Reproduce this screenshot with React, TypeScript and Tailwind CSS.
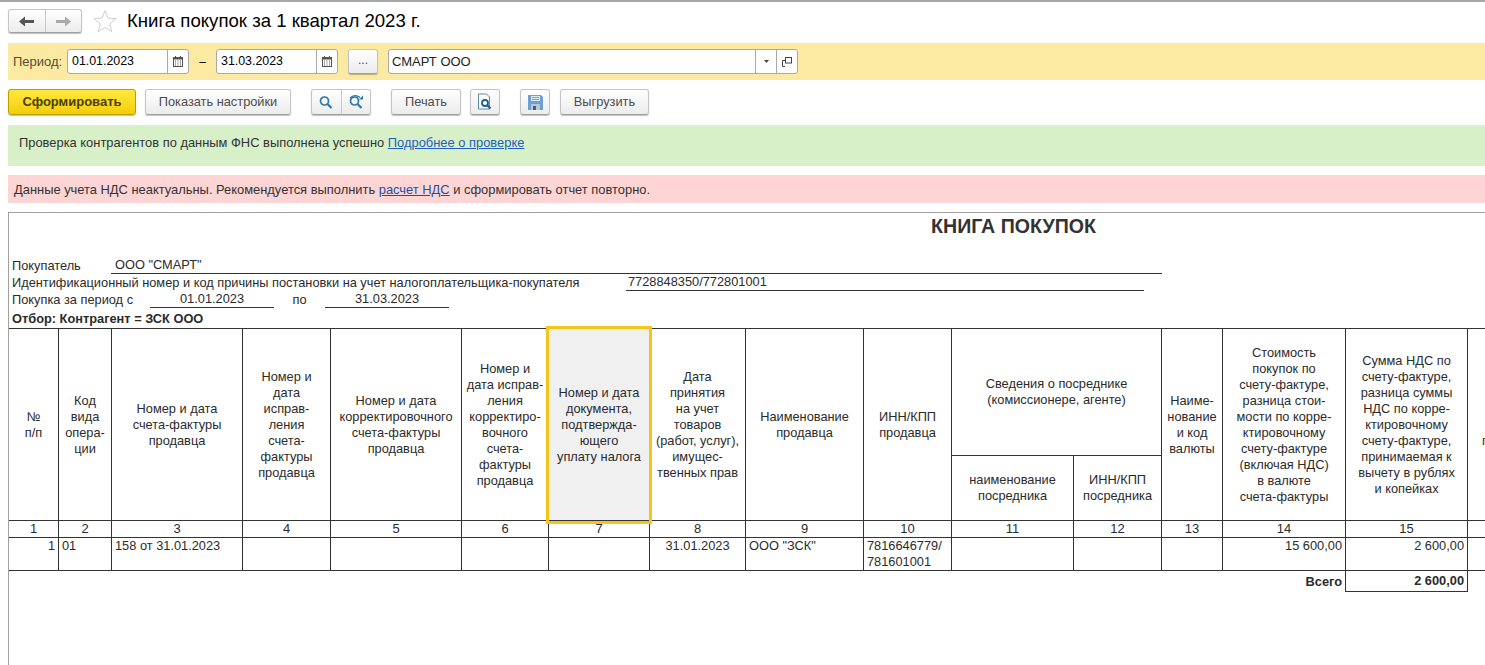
import React from "react"

const btn =
  "flex items-center justify-center rounded-[3px] border border-[#c4c4c4] border-b-[#a0a0a0] bg-gradient-to-b from-white to-[#ececec] shadow-[0_1px_1px_rgba(0,0,0,0.25)] text-[12.8px] text-[#4d4d4d]"
const field = "flex h-[25px] items-stretch rounded-[3px] border border-[#a9a9a9] bg-white"
const th = "border-r border-b border-[#333] text-center align-middle font-normal px-0"
const td = "border-r border-b border-[#333] align-top px-[3px] leading-4"

function CalendarIcon() {
  return (
    <svg width="10" height="11" viewBox="0 0 10 11">
      <rect x=".5" y="1.500" width="9" height="9" fill="none" stroke="#555" />
      <rect x="0" y="1" width="10" height="2.500" fill="#555" />
      <rect x="2" y="0" width="1" height="2" fill="#555" />
      <rect x="7" y="0" width="1" height="2" fill="#555" />
      <path d="M2 5h1M4.500 5h1M7 5h1M2 7h1M4.500 7h1M7 7h1M2 9h1M4.500 9h1M7 9h1" stroke="#555" />
    </svg>
  )
}

function DateField({ value }: { value: string }) {
  return (
    <div className={`${field} w-[122px]`}>
      <div className="flex-1 pl-[4px] text-[12.4px] leading-[23px]">{value}</div>
      <div className="flex w-[21px] items-center justify-center border-l border-[#a9a9a9]">
        <CalendarIcon />
      </div>
    </div>
  )
}

function SearchIcon({ spin }: { spin?: boolean }) {
  return (
    <svg width="16" height="16" viewBox="0 0 16 16" fill="none">
      <circle cx="6.500" cy="7" r="4" stroke="#2f77ad" strokeWidth="1.700" />
      <path d="M9.500 10l4 4" stroke="#2f77ad" strokeWidth="2.200" />
      {spin && <path d="M2 4C5 1 9 1 12 3.500" stroke="#2f77ad" strokeWidth="1.300" />}
      {spin && <path d="M15 1.500v4h-4z" fill="#2f77ad" />}
    </svg>
  )
}

function NavArrow({ color, flip }: { color: string; flip?: boolean }) {
  return (
    <svg width="15" height="11" viewBox="0 0 15 11" className={flip ? "-scale-x-100" : ""}>
      <path d="M0 5.500L6 .5V4h9v3H6v3.500z" fill={color} />
    </svg>
  )
}

function Header() {
  return (
    <div className="flex h-[43px] items-start border-t-2 border-[#a8a8a8] pl-2 pt-[7px]">
      <div className="flex h-[24px] w-[74px] rounded-[3px] border border-[#c4c4c4] border-b-[#a0a0a0] bg-gradient-to-b from-white to-[#ececec] shadow-[0_1px_1px_rgba(0,0,0,0.25)]">
        <div className="flex flex-1 items-center justify-center border-r border-[#c8c8c8]">
          <NavArrow color="#555" />
        </div>
        <div className="flex flex-1 items-center justify-center">
          <NavArrow color="#aaa" flip />
        </div>
      </div>
      <svg className="ml-[11px]" width="24" height="24" viewBox="0 0 24 24">
        <path
          d="M12 1.500l3 7.600 8 .6-6.200 5.100 2 7.900L12 18.400 5.200 22.700l2-7.900L1 9.700l8-.6z"
          fill="#fff"
          stroke="#cfcfcf"
        />
      </svg>
      <div className="ml-[10px] text-[18.6px] leading-[24px] text-black">Книга покупок за 1 квартал 2023 г.</div>
    </div>
  )
}

function PeriodBar() {
  return (
    <div className="ml-2 flex h-[37px] items-center bg-[#fce9a2] pl-[5px]">
      <span className="w-[54px] text-[13px] text-[#5a4a3a]">Период:</span>
      <DateField value="01.01.2023" />
      <span className="w-[27px] text-center text-[12px]">–</span>
      <DateField value="31.03.2023" />
      <div className={`${btn} ml-[10px] h-[25px] w-[30px] pb-1 text-[12px]`}>...</div>
      <div className={`${field} ml-[10px] w-[410px]`}>
        <div className="flex-1 pl-[3px] text-[13px] leading-[23px] text-[#222]">СМАРТ ООО</div>
        <div className="flex w-[21px] items-center justify-center border-l border-[#a9a9a9]">
          <svg width="5" height="3" viewBox="0 0 5 3">
            <path d="M0 0h5L2.500 3z" fill="#444" />
          </svg>
        </div>
        <div className="flex w-[21px] items-center justify-center border-l border-[#a9a9a9]">
          <svg width="10" height="10" viewBox="0 0 10 10" fill="none">
            <rect x="3.500" y=".5" width="6" height="5.500" stroke="#444" />
            <path d="M3 3.500H.5v6H3" stroke="#444" />
          </svg>
        </div>
      </div>
    </div>
  )
}

function Toolbar() {
  return (
    <div className="ml-2 mt-[9px] flex h-[26px] items-stretch">
      <div className="flex w-[128px] items-center justify-center rounded-[3px] border border-[#b8a000] bg-gradient-to-b from-[#ffe93a] to-[#f5cc00] text-[13px] font-bold text-[#4a4000] shadow-[0_1px_1px_rgba(0,0,0,0.25)]">
        Сформировать
      </div>
      <div className={`${btn} ml-[9px] w-[146px]`}>Показать настройки</div>
      <div className="ml-[20px] flex w-[60px] rounded-[3px] border border-[#c4c4c4] border-b-[#a0a0a0] bg-gradient-to-b from-white to-[#ececec] shadow-[0_1px_1px_rgba(0,0,0,0.25)]">
        <div className="flex flex-1 items-center justify-center border-r border-[#c8c8c8]">
          <SearchIcon />
        </div>
        <div className="flex flex-1 items-center justify-center">
          <SearchIcon spin />
        </div>
      </div>
      <div className={`${btn} ml-[20px] w-[70px]`}>Печать</div>
      <div className={`${btn} ml-[9px] w-[30px]`}>
        <svg width="16" height="18" viewBox="0 0 16 18" fill="none">
          <path d="M1.500 1h8l3 3v12h-11z" fill="#fff" stroke="#5d89a8" />
          <circle cx="8" cy="10" r="3" stroke="#1f5f8f" strokeWidth="1.800" />
          <path d="M10 12l3.500 3.500" stroke="#1f5f8f" strokeWidth="2.200" />
        </svg>
      </div>
      <div className={`${btn} ml-[20px] w-[30px]`}>
        <svg width="15" height="15" viewBox="0 0 15 15">
          <path d="M0 0h13l2 2v13H0z" fill="#6f9fd0" />
          <rect x="3" y="1" width="9" height="5" fill="#dbe7f2" />
          <path d="M4 2.500h7M4 4.500h7" stroke="#8aa9c6" />
          <rect x="3" y="9" width="9" height="6" fill="#b9c8d6" />
          <rect x="5" y="11" width="3" height="4" fill="#44607a" />
        </svg>
      </div>
      <div className={`${btn} ml-[10px] w-[89px]`}>Выгрузить</div>
    </div>
  )
}

function Notices() {
  return (
    <>
      <div className="ml-2 mt-[10px] h-[41px] bg-[#d8f0c8] pl-[11px] pt-[9px] text-[12.9px] leading-[18px] text-[#333]">
        Проверка контрагентов по данным ФНС выполнена успешно{" "}
        <a className="text-[#1f5fbf] underline">Подробнее о проверке</a>
      </div>
      <div className="ml-2 mt-[9px] h-[28px] bg-[#fdd5d5] pl-[6px] pt-[6px] text-[12.9px] leading-[18px] text-[#333]">
        Данные учета НДС неактуальны. Рекомендуется выполнить{" "}
        <a className="text-[#1f4fa0] underline">расчет НДС</a> и сформировать отчет повторно.
      </div>
    </>
  )
}

const widths = [50, 53, 131, 88, 131, 87, 101, 96, 118, 88, 122, 88, 61, 123, 122, 120]

function Cell({ lines }: { lines: string[] }) {
  return (
    <>
      {lines.map((l, i) => (
        <div key={i}>{l}</div>
      ))}
    </>
  )
}

function ReportTable() {
  const top = "border-t"
  return (
    <table className="table-fixed border-separate border-spacing-0 w-[1579px] text-[12.8px] leading-4 text-[#2b2b2b]">
      <colgroup>
        {widths.map((w, i) => (
          <col key={i} style={{ width: w }} />
        ))}
      </colgroup>
      <tbody>
        <tr className="h-[128px]">
          <th rowSpan={2} className={`${th} ${top}`}><Cell lines={["№", "п/п"]} /></th>
          <th rowSpan={2} className={`${th} ${top}`}><Cell lines={["Код", "вида", "опера-", "ции"]} /></th>
          <th rowSpan={2} className={`${th} ${top}`}><Cell lines={["Номер и дата", "счета-фактуры", "продавца"]} /></th>
          <th rowSpan={2} className={`${th} ${top}`}><Cell lines={["Номер и", "дата", "исправ-", "ления", "счета-", "фактуры", "продавца"]} /></th>
          <th rowSpan={2} className={`${th} ${top}`}><Cell lines={["Номер и дата", "корректировочного", "счета-фактуры", "продавца"]} /></th>
          <th rowSpan={2} className={`${th} ${top}`}><Cell lines={["Номер и", "дата исправ-", "ления", "корректиро-", "вочного", "счета-", "фактуры", "продавца"]} /></th>
          <th rowSpan={2} className={`${th} ${top} relative bg-[#f0f0f0]`}>
            <Cell lines={["Номер и дата", "документа,", "подтвержда-", "ющего", "уплату налога"]} />
            <div className="absolute -left-[3px] -right-[3px] -top-[3px] -bottom-[4px] border-[3px] border-[#f5c518]" />
          </th>
          <th rowSpan={2} className={`${th} ${top}`}><Cell lines={["Дата", "принятия", "на учет", "товаров", "(работ, услуг),", "имущес-", "твенных прав"]} /></th>
          <th rowSpan={2} className={`${th} ${top}`}><Cell lines={["Наименование", "продавца"]} /></th>
          <th rowSpan={2} className={`${th} ${top}`}><Cell lines={["ИНН/КПП", "продавца"]} /></th>
          <th colSpan={2} className={`${th} ${top}`}><Cell lines={["Сведения о посреднике", "(комиссионере, агенте)"]} /></th>
          <th rowSpan={2} className={`${th} ${top}`}><Cell lines={["Наиме-", "нование", "и код", "валюты"]} /></th>
          <th rowSpan={2} className={`${th} ${top}`}><Cell lines={["Стоимость", "покупок по", "счету-фактуре,", "разница стои-", "мости по корре-", "ктировочному", "счету-фактуре", "(включая НДС)", "в валюте", "счета-фактуры"]} /></th>
          <th rowSpan={2} className={`${th} ${top}`}><Cell lines={["Сумма НДС по", "счету-фактуре,", "разница суммы", "НДС по корре-", "ктировочному", "счету-фактуре,", "принимаемая к", "вычету в рублях", "и копейках"]} /></th>
          <th rowSpan={2} className={`${th} ${top} border-r-0 pl-[14px] text-left`}><Cell lines={["\u00a0", "\u00a0", "п"]} /></th>
        </tr>
        <tr className="h-[65px]">
          <th className={th}><Cell lines={["наименование", "посредника"]} /></th>
          <th className={th}><Cell lines={["ИНН/КПП", "посредника"]} /></th>
        </tr>
        <tr className="h-[17px]">
          {widths.slice(0, 15).map((_, i) => (
            <td key={i} className={`${th} text-[13px] leading-4`}>{i + 1}</td>
          ))}
          <td className="border-b border-[#333]" />
        </tr>
        <tr className="h-[33px]">
          <td className={`${td} text-right`}>1</td>
          <td className={td}>01</td>
          <td className={td}>158 от 31.01.2023</td>
          <td className={td} />
          <td className={td} />
          <td className={td} />
          <td className={td} />
          <td className={`${td} text-center`}>31.01.2023</td>
          <td className={td}>ООО "ЗСК"</td>
          <td className={td}>7816646779/<br />781601001</td>
          <td className={td} />
          <td className={td} />
          <td className={td} />
          <td className={`${td} text-right`}>15 600,00</td>
          <td className={`${td} text-right`}>2 600,00</td>
          <td className="border-b border-[#333]" />
        </tr>
        <tr className="h-[21px] font-bold">
          <td colSpan={14} className="border-r border-[#333] px-[3px] text-right">Всего</td>
          <td className="border-r border-b border-[#333] px-[3px] text-right">2 600,00</td>
          <td />
        </tr>
      </tbody>
    </table>
  )
}

function Report() {
  const text = "text-[12.8px] leading-4 text-[#2b2b2b]"
  return (
    <div className="ml-2 mt-[9px] h-[453px] overflow-hidden border-l border-t border-[#a0a0a0]">
      <div className="h-[39px] w-[2009px] pt-[1px] text-center text-[19.6px] font-bold leading-6 text-[#333]">
        КНИГА ПОКУПОК
      </div>
      <div className={`${text} ml-[3px]`}>
        <div className="mt-[5px] flex h-[17px] items-end">
          <span className="w-[99px]">Покупатель</span>
          <span className="h-[17px] w-[1051px] border-b border-[#333] pl-1">ООО "СМАРТ"</span>
        </div>
        <div className="flex h-[17px] items-end">
          <span className="w-[614px] whitespace-nowrap">Идентификационный номер и код причины постановки на учет налогоплательщика-покупателя</span>
          <span className="h-[17px] w-[518px] border-b border-[#333] pl-[2px]">7728848350/772801001</span>
        </div>
        <div className="flex h-[17px] items-end">
          <span className="w-[138px]">Покупка за период с</span>
          <span className="h-[17px] w-[124px] border-b border-[#333] text-center">01.01.2023</span>
          <span className="w-[51px] text-center">по</span>
          <span className="h-[17px] w-[124px] border-b border-[#333] text-center">31.03.2023</span>
        </div>
        <div className="h-[20px] pt-[3px] font-bold">Отбор: Контрагент = ЗСК ООО</div>
      </div>
      <ReportTable />
    </div>
  )
}

export default function App() {
  return (
    <div className="h-[665px] w-[1485px] overflow-hidden bg-white font-['Liberation_Sans',Arial,sans-serif]">
      <Header />
      <PeriodBar />
      <Toolbar />
      <Notices />
      <Report />
    </div>
  )
}
